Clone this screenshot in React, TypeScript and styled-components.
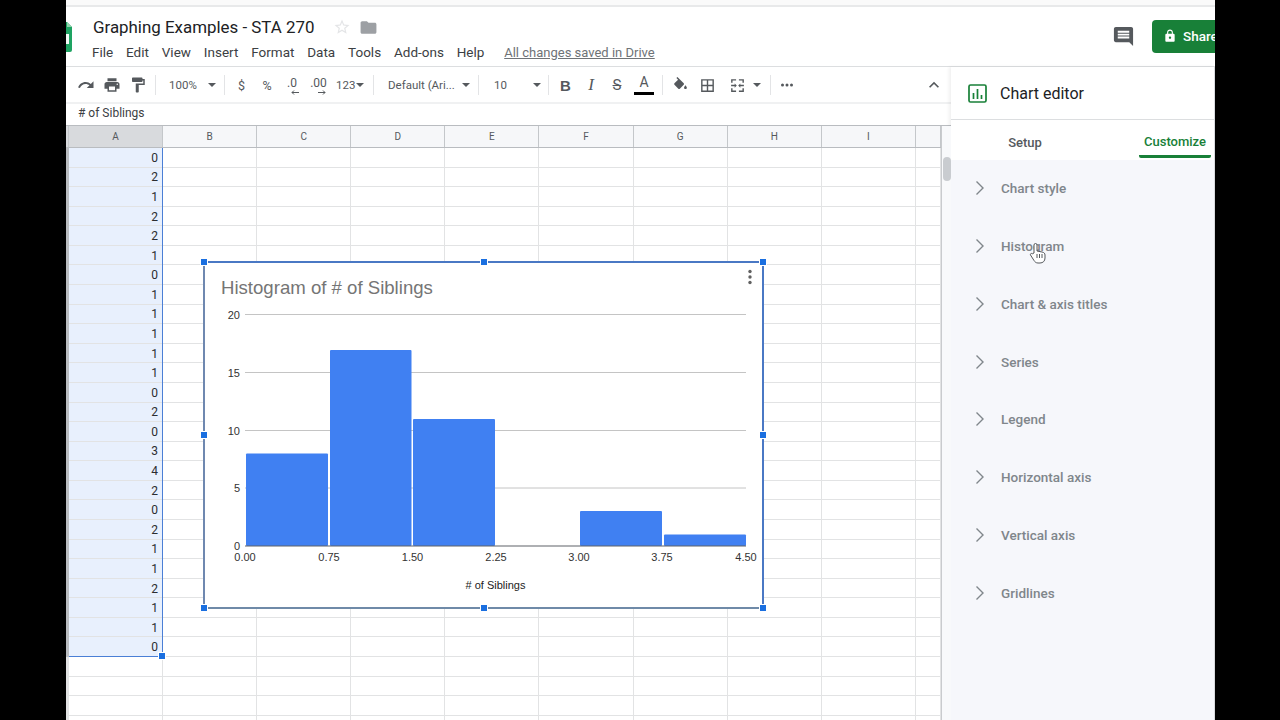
import styled, { createGlobalStyle } from "styled-components";

const GlobalStyle = createGlobalStyle`
    html, body {
        margin: 0;
        padding: 0;
        background: #000000;
    }
    * {
        box-sizing: border-box;
    }
`;

const Page = styled.div`
    width: 1280px;
    height: 720px;
    padding: 0 65px 0 66px;
    overflow: hidden;
    background: #000000;
    font-family: Roboto, "Liberation Sans", sans-serif;
`;

const Screen = styled.div`
    display: flex;
    flex-direction: column;
    width: 1149px;
    height: 720px;
    overflow: hidden;
    background: #ffffff;
`;

const TopStrip = styled.div`
    flex: 0 0 7px;
    border-bottom: 2px solid #e8e9ea;
    background: #fafafa;
`;

const TitleBar = styled.header`
    display: flex;
    flex: 0 0 60px;
    align-items: flex-start;
    border-bottom: 1px solid #dcdee0;
`;

const LogoClip = styled.svg`
    flex: 0 0 auto;
    width: 6px;
    height: 30px;
    margin-top: 15px;
    margin-right: 20px;
`;

const TitleColumn = styled.div`
    display: flex;
    flex-direction: column;
    padding-top: 9px;
`;

const DocRow = styled.div`
    display: flex;
    align-items: center;
    height: 22px;
    padding-left: 1px;
`;

const DocTitle = styled.span`
    width: 240px;
    color: #202124;
    font-size: 16.9px;
    white-space: nowrap;
`;

const FolderGap = styled.span`
    width: 8px;
`;

const MenuRow = styled.nav`
    display: flex;
    align-items: center;
    gap: 12.85px;
    height: 20px;
    margin-top: 4px;
    color: #3c4043;
    font-size: 13.5px;
`;

const SavedLink = styled.span`
    margin-left: 7px;
    color: #6f7377;
    font-size: 13px;
    text-decoration: underline;
`;

const TitleActions = styled.div`
    display: flex;
    align-items: center;
    margin-left: auto;
    padding-top: 13px;
`;

const ShareButton = styled.div`
    display: flex;
    flex: 0 0 auto;
    align-items: center;
    gap: 6px;
    width: 63px;
    height: 33px;
    margin-left: 17px;
    padding: 0 0 2px 11px;
    border-radius: 4px 0 0 4px;
    overflow: hidden;
    background: #188038;
    color: #ffffff;
    font-size: 13.5px;
    font-weight: 500;
    > svg {
        flex: 0 0 auto;
    }
`;

const Workspace = styled.div`
    display: flex;
    flex: 1 1 auto;
    min-height: 0;
`;

const SheetColumn = styled.div`
    display: flex;
    flex: 0 0 885px;
    flex-direction: column;
    min-width: 0;
`;

const Toolbar = styled.div`
    display: flex;
    flex: 0 0 37px;
    align-items: center;
    padding: 1px 7px 0 6px;
    border-bottom: 2px solid #f0f1f2;
    color: #55595d;
`;

const ToolSpacer = styled.span`
    flex: 1;
`;

const ToolButton = styled.div<{ $w: number }>`
    display: flex;
    flex: 0 0 ${(props) => props.$w}px;
    align-items: center;
    justify-content: center;
    height: 24px;
    position: relative;
    font-size: 12.5px;
`;

const ToolDrop = styled.div<{ $w: number; $left: number; $right: number }>`
    display: flex;
    flex: 0 0 ${(props) => props.$w}px;
    align-items: center;
    justify-content: space-between;
    height: 24px;
    padding: 0 ${(props) => props.$right}px 0 ${(props) => props.$left}px;
    font-size: 11.5px;
    white-space: nowrap;
`;

const Divider = styled.div`
    flex: 0 0 1px;
    height: 20px;
    margin: 0 4px;
    background: #e3e4e6;
`;

const Caret = styled.span`
    flex: 0 0 auto;
    width: 0;
    height: 0;
    border-top: 4px solid #55595d;
    border-right: 4px solid transparent;
    border-left: 4px solid transparent;
`;

const CaretSlot = styled.div`
    display: flex;
    flex: 0 0 10px;
    justify-content: center;
    margin-right: 4px;
`;

const DecimalLabel = styled.span`
    margin-top: -5px;
    font-size: 12px;
`;

const DecimalArrow = styled.svg`
    position: absolute;
    top: 17px;
    left: 50%;
    margin-left: -1px;
`;

const BoldLetter = styled.span`
    font-family: "Liberation Sans", sans-serif;
    font-size: 15px;
    font-weight: 700;
`;

const ItalicLetter = styled.span`
    font-family: "Liberation Serif", serif;
    font-size: 17px;
    font-style: italic;
`;

const StrikeLetter = styled.span`
    font-size: 15px;
    text-decoration: line-through;
`;

const ColorLetter = styled.span`
    display: flex;
    flex-direction: column;
    align-items: center;
    font-size: 14px;
    line-height: 15px;
    &::after {
        content: "";
        width: 20px;
        height: 3px;
        margin-top: 2px;
        background: #000000;
    }
`;

const FormulaBar = styled.div`
    display: flex;
    flex: 0 0 22px;
    align-items: center;
    padding: 0 0 3px 12px;
    border-bottom: 1px solid #b9bcc0;
    color: #3c4043;
    font-size: 12px;
`;

const GridArea = styled.div`
    display: flex;
    flex: 1 1 auto;
    min-height: 0;
`;

const GridWrap = styled.div`
    position: relative;
    flex: 0 0 875px;
    overflow: hidden;
`;

const HeaderRow = styled.div`
    display: grid;
    grid-template-columns: 3px repeat(9, 94.1px) 25px;
    height: 22px;
    border-bottom: 1px solid #b9bcc0;
    background: #f6f7f9;
`;

const HeaderCell = styled.div<{ $selected?: boolean }>`
    display: flex;
    align-items: center;
    justify-content: center;
    border-right: 1px solid #c4c7ca;
    background: ${(props) => (props.$selected ? "#d8dadd" : "transparent")};
    color: #55595d;
    font-size: 10px;
`;

const DataRow = styled.div`
    display: grid;
    grid-template-columns: 3px repeat(9, 94.1px) 25px;
    height: 19.58px;
`;

const DataCell = styled.div<{ $selected?: boolean }>`
    display: flex;
    align-items: center;
    justify-content: flex-end;
    padding: 1px 4px 0 0;
    border-right: 1px solid #e2e3e4;
    border-bottom: 1px solid #e2e3e4;
    background: ${(props) => (props.$selected ? "#e8f0fd" : "#ffffff")};
    color: #2b2d30;
    font-size: 12px;
`;

const GutterCell = styled.div<{ $selected?: boolean }>`
    background: ${(props) => (props.$selected ? "#b9bcc0" : "#e2e3e4")};
`;

const Selection = styled.div`
    position: absolute;
    top: 22px;
    left: 3px;
    width: 94.1px;
    height: 509px;
    border-right: 1px solid #4a7fd6;
    border-bottom: 1px solid #4a7fd6;
    pointer-events: none;
    &::after {
        content: "";
        position: absolute;
        right: -4px;
        bottom: -4px;
        width: 6px;
        height: 6px;
        border: 1px solid #ffffff;
        background: #1a6fe0;
    }
`;

const ChartFrame = styled.div`
    position: absolute;
    top: 135px;
    left: 137px;
    width: 561px;
    height: 348px;
    border: 2px solid #4a78c4;
    border-bottom-color: #6f8aa8;
    border-left-color: #6f88b0;
    background: #ffffff;
`;

const ChartCanvas = styled.svg`
    display: block;
    position: absolute;
    top: -1px;
    left: -1px;
`;

const Handle = styled.span<{ $x: number; $y: number }>`
    position: absolute;
    top: calc(${(props) => props.$y * 50}% + ${(props) => props.$y - 1}px);
    left: calc(${(props) => props.$x * 50}% + ${(props) => props.$x - 1}px);
    width: 8px;
    height: 8px;
    margin: -4px 0 0 -4px;
    border: 1px solid #ffffff;
    background: #1a6fe0;
`;

const ScrollTrack = styled.div`
    position: relative;
    flex: 0 0 10px;
    border-left: 1px solid #c9cbce;
    background: #f8f9fb;
`;

const ScrollThumb = styled.div`
    position: absolute;
    top: 31px;
    left: 1px;
    width: 8px;
    height: 24px;
    border-radius: 4px;
    background: #c9ccd0;
`;

const Panel = styled.aside`
    display: flex;
    flex: 0 0 264px;
    flex-direction: column;
    border-right: 1px solid #d9dbde;
    box-shadow: -2px 0 3px rgba(60, 64, 67, 0.08);
`;

const PanelHeader = styled.div`
    display: flex;
    flex: 0 0 53px;
    align-items: center;
    gap: 13px;
    padding-left: 17px;
    border-bottom: 1px solid #dcdee0;
    color: #202124;
    font-size: 16px;
`;

const TabRow = styled.div`
    display: flex;
    flex: 0 0 40px;
    padding-left: 37px;
`;

const Tab = styled.div<{ $active?: boolean; $w: number }>`
    display: flex;
    flex: 0 0 ${(props) => props.$w}px;
    align-items: center;
    justify-content: center;
    height: 38px;
    padding-top: ${(props) => (props.$active ? 8 : 6)}px;
    color: ${(props) => (props.$active ? "#188038" : "#55595d")};
    font-size: 13px;
    font-weight: 500;
    ${(props) => (props.$active ? "border-bottom: 3px solid #188038; border-radius: 0 0 2px 2px;" : "")}
`;

const TabSpacer = styled.div`
    flex: 0 0 77px;
`;

const SectionList = styled.div`
    flex: 1 1 auto;
    position: relative;
    background: #f6f7fb;
`;

const SectionRow = styled.div`
    display: flex;
    align-items: center;
    gap: 16px;
    height: 57.87px;
    padding-left: 24px;
    color: #80868b;
    font-size: 13.5px;
    font-weight: 500;
    &:first-child {
        margin-top: -1px;
    }
`;

const HandCursor = styled.svg`
    position: absolute;
    top: 82px;
    left: 78px;
`;

const Icon = ({ d, size = 18, fill = "#55595d" }: { d: string; size?: number; fill?: string }) => (
    <svg width={size} height={size} viewBox="0 0 24 24">
        <path d={d} fill={fill} />
    </svg>
);

const ICONS = {
    redo: "M18.4 10.6C16.55 8.99 14.15 8 11.5 8c-4.65 0-8.58 3.03-9.96 7.22L3.9 16c1.05-3.19 4.05-5.5 7.6-5.5 1.95 0 3.73.72 5.12 1.88L13 16h9V7l-3.6 3.6z",
    print: "M19 8H5c-1.66 0-3 1.34-3 3v6h4v4h12v-4h4v-6c0-1.66-1.34-3-3-3zm-3 11H8v-5h8v5zm3-7c-.55 0-1-.45-1-1s.45-1 1-1 1 .45 1 1-.45 1-1 1zm-1-9H6v4h12V3z",
    paint: "M18 4V3c0-.55-.45-1-1-1H5c-.55 0-1 .45-1 1v4c0 .55.45 1 1 1h12c.55 0 1-.45 1-1V6h1v4H9v11c0 .55.45 1 1 1h2c.55 0 1-.45 1-1v-9h8V4h-3z",
    fill: "M16.56 8.94L7.62 0 6.21 1.41l2.38 2.38-5.15 5.15c-.59.59-.59 1.54 0 2.12l5.5 5.5c.29.29.68.44 1.06.44s.77-.15 1.06-.44l5.5-5.5c.59-.58.59-1.53 0-2.12zM19 11.5s-2 2.17-2 3.5c0 1.1.9 2 2 2s2-.9 2-2c0-1.33-2-3.5-2-3.5z",
    borders: "M3 3v18h18V3H3zm8 16H5v-6h6v6zm0-8H5V5h6v6zm8 8h-6v-6h6v6zm0-8h-6V5h6v6z",
    merge: "M3 3h7v2H5v3H3V3zm11 0h7v5h-2V5h-5V3zM3 16h2v3h5v2H3v-5zm16 0h2v5h-7v-2h5v-3zM3 11h5V9l3 3-3 3v-2H3v-2zm18 0v2h-5v2l-3-3 3-3v2h5z",
    more: "M6 10a2 2 0 1 0 0 4 2 2 0 0 0 0-4zm6 0a2 2 0 1 0 0 4 2 2 0 0 0 0-4zm6 0a2 2 0 1 0 0 4 2 2 0 0 0 0-4z",
    up: "M7.41 15.41L12 10.83l4.59 4.58L18 14l-6-6-6 6z",
    comment: "M21.99 4c0-1.1-.89-2-1.99-2H4c-1.1 0-2 .9-2 2v12c0 1.1.9 2 2 2h14l4 4-.01-18zM18 14H6v-2h12v2zm0-3H6V9h12v2zm0-3H6V6h12v2z",
    lock: "M18 8h-1V6c0-2.76-2.24-5-5-5S7 3.24 7 6v2H6c-1.1 0-2 .9-2 2v10c0 1.1.9 2 2 2h12c1.1 0 2-.9 2-2V10c0-1.1-.9-2-2-2zm-6 9c-1.1 0-2-.9-2-2s.9-2 2-2 2 .9 2 2-.9 2-2 2zm3.1-9H8.9V6c0-1.71 1.39-3.1 3.1-3.1 1.71 0 3.1 1.39 3.1 3.1v2z",
    star: "M22 9.24l-7.19-.62L12 2 9.19 8.63 2 9.24l5.46 4.73L5.82 21 12 17.27 18.18 21l-1.63-7.03L22 9.24zM12 15.4l-3.76 2.27 1-4.28-3.32-2.88 4.38-.38L12 6.1l1.71 4.04 4.38.38-3.32 2.88 1 4.28L12 15.4z",
    folder: "M10 4H4c-1.1 0-1.99.9-1.99 2L2 18c0 1.1.9 2 2 2h16c1.1 0 2-.9 2-2V8c0-1.1-.9-2-2-2h-8l-2-2z",
};

const MENU = ["File", "Edit", "View", "Insert", "Format", "Data", "Tools", "Add-ons", "Help"];
const COLUMNS = ["A", "B", "C", "D", "E", "F", "G", "H", "I", ""];
const VALUES = [0, 2, 1, 2, 2, 1, 0, 1, 1, 1, 1, 1, 0, 2, 0, 3, 4, 2, 0, 2, 1, 1, 2, 1, 1, 0];
const ROW_COUNT = 30;
const SECTIONS = ["Chart style", "Histogram", "Chart & axis titles", "Series", "Legend", "Horizontal axis", "Vertical axis", "Gridlines"];

// chart coords are frame relative (frame sits at 204,262 in the picture)
const PLOT_LEFT = 41;
const PLOT_RIGHT = 542;
const BASELINE = 284;
const Y_TICKS = [
    { label: "20", y: 52.5 },
    { label: "15", y: 110.5 },
    { label: "10", y: 168.5 },
    { label: "5", y: 226 },
    { label: "0", y: 284 },
];
const X_TICKS = [
    { label: "0.00", x: 41 },
    { label: "0.75", x: 125 },
    { label: "1.50", x: 208.5 },
    { label: "2.25", x: 292 },
    { label: "3.00", x: 375 },
    { label: "3.75", x: 458 },
    { label: "4.50", x: 542 },
];
const BARS = [
    { x: 42, w: 82, top: 191.5 },
    { x: 126, w: 81.5, top: 88 },
    { x: 209, w: 82, top: 157 },
    { x: 376, w: 82, top: 249 },
    { x: 460, w: 82, top: 272.5 },
];
const HANDLES = [
    [0, 0],
    [1, 0],
    [2, 0],
    [0, 1],
    [2, 1],
    [0, 2],
    [1, 2],
    [2, 2],
];

function HistogramChart() {
    return (
        <ChartFrame>
            <ChartCanvas width="560" height="346" viewBox="0 0 560 346" fontFamily="'Liberation Sans', sans-serif">
                <text x="17" y="32" fontSize="18.6" fill="#757575">
                    Histogram of # of Siblings
                </text>
                <circle cx="546" cy="9.5" r="1.7" fill="#616161" />
                <circle cx="546" cy="15" r="1.7" fill="#616161" />
                <circle cx="546" cy="20.5" r="1.7" fill="#616161" />
                {Y_TICKS.slice(0, 4).map((t) => (
                    <line key={t.label} x1={PLOT_LEFT} x2={PLOT_RIGHT} y1={t.y} y2={t.y} stroke="#c4c4c4" />
                ))}
                {Y_TICKS.map((t) => (
                    <text key={t.label} x="36" y={t.y + 4} fontSize="11" fill="#333333" textAnchor="end">
                        {t.label}
                    </text>
                ))}
                {BARS.map((b) => (
                    <rect key={b.x} x={b.x} y={b.top} width={b.w} height={BASELINE - b.top} rx="1" fill="#4080f2" />
                ))}
                <line x1={PLOT_LEFT} x2={PLOT_RIGHT} y1={BASELINE} y2={BASELINE} stroke="#5f6368" strokeWidth="1.2" />
                {X_TICKS.map((t) => (
                    <text key={t.label} x={t.x} y="299" fontSize="11" fill="#333333" textAnchor="middle">
                        {t.label}
                    </text>
                ))}
                <text x="291.5" y="327" fontSize="11" fill="#222222" textAnchor="middle">
                    # of Siblings
                </text>
            </ChartCanvas>
            {HANDLES.map(([x, y]) => (
                <Handle key={`${x}-${y}`} $x={x} $y={y} />
            ))}
        </ChartFrame>
    );
}

function App() {
    return (
        <Page>
            <GlobalStyle />
            <Screen>
                <TopStrip />
                <TitleBar>
                    <LogoClip viewBox="0 0 6 30">
                        <path d="M0 0h1l5 5v23a2 2 0 0 1-2 2H0z" fill="#1ea362" />
                        <path d="M1 0l5 5H1z" fill="#8ed1ab" />
                        <rect x="0" y="12" width="3" height="10" fill="#f4fbf7" />
                    </LogoClip>
                    <TitleColumn>
                        <DocRow>
                            <DocTitle>Graphing Examples - STA 270</DocTitle>
                            <Icon d={ICONS.star} size={18} fill="#e4e5e7" />
                            <FolderGap />
                            <Icon d={ICONS.folder} size={19} fill="#9da0a4" />
                        </DocRow>
                        <MenuRow>
                            {MENU.map((item) => (
                                <span key={item}>{item}</span>
                            ))}
                            <SavedLink>All changes saved in Drive</SavedLink>
                        </MenuRow>
                    </TitleColumn>
                    <TitleActions>
                        <Icon d={ICONS.comment} size={23} />
                        <ShareButton>
                            <Icon d={ICONS.lock} size={14} fill="#ffffff" />
                            Share
                        </ShareButton>
                    </TitleActions>
                </TitleBar>
                <Workspace>
                    <SheetColumn>
                        <Toolbar>
                            <ToolButton $w={27}>
                                <Icon d={ICONS.redo} />
                            </ToolButton>
                            <ToolButton $w={26}>
                                <Icon d={ICONS.print} />
                            </ToolButton>
                            <ToolButton $w={26}>
                                <Icon d={ICONS.paint} />
                            </ToolButton>
                            <Divider />
                            <ToolDrop $w={60} $left={9} $right={4}>
                                100%
                                <Caret />
                            </ToolDrop>
                            <Divider />
                            <ToolButton $w={25}>$</ToolButton>
                            <ToolButton $w={26}>%</ToolButton>
                            <ToolButton $w={24}>
                                <DecimalLabel>.0</DecimalLabel>
                                <DecimalArrow width="8" height="5" viewBox="0 0 8 5">
                                    <path d="M8 2.5H1M3 .5L1 2.5l2 2" fill="none" stroke="#55595d" />
                                </DecimalArrow>
                            </ToolButton>
                            <ToolButton $w={29}>
                                <DecimalLabel>.00</DecimalLabel>
                                <DecimalArrow width="8" height="5" viewBox="0 0 8 5">
                                    <path d="M0 2.5h7M5 .5l2 2-2 2" fill="none" stroke="#55595d" />
                                </DecimalArrow>
                            </ToolButton>
                            <ToolDrop $w={36} $left={3} $right={5}>
                                123
                                <Caret />
                            </ToolDrop>
                            <Divider />
                            <ToolDrop $w={96} $left={10} $right={4}>
                                Default (Ari...
                                <Caret />
                            </ToolDrop>
                            <Divider />
                            <ToolDrop $w={61} $left={11} $right={3}>
                                10
                                <Caret />
                            </ToolDrop>
                            <Divider />
                            <ToolButton $w={25}>
                                <BoldLetter>B</BoldLetter>
                            </ToolButton>
                            <ToolButton $w={26}>
                                <ItalicLetter>I</ItalicLetter>
                            </ToolButton>
                            <ToolButton $w={26}>
                                <StrikeLetter>S</StrikeLetter>
                            </ToolButton>
                            <ToolButton $w={28}>
                                <ColorLetter>A</ColorLetter>
                            </ToolButton>
                            <Divider />
                            <ToolButton $w={26}>
                                <Icon d={ICONS.fill} size={17} />
                            </ToolButton>
                            <ToolButton $w={29}>
                                <Icon d={ICONS.borders} size={17} />
                            </ToolButton>
                            <ToolButton $w={30}>
                                <Icon d={ICONS.merge} size={17} />
                            </ToolButton>
                            <CaretSlot>
                                <Caret />
                            </CaretSlot>
                            <Divider />
                            <ToolButton $w={24}>
                                <Icon d={ICONS.more} size={18} />
                            </ToolButton>
                            <ToolSpacer />
                            <Icon d={ICONS.up} size={20} />
                        </Toolbar>
                        <FormulaBar># of Siblings</FormulaBar>
                        <GridArea>
                            <GridWrap>
                                <HeaderRow>
                                    <HeaderCell $selected />
                                    {COLUMNS.map((c, i) => (
                                        <HeaderCell key={i} $selected={c === "A"}>
                                            {c}
                                        </HeaderCell>
                                    ))}
                                </HeaderRow>
                                {Array.from({ length: ROW_COUNT }, (_, row) => (
                                    <DataRow key={row}>
                                        <GutterCell $selected={row < VALUES.length} />
                                        {COLUMNS.map((c, col) => (
                                            <DataCell key={col} $selected={col === 0 && row < VALUES.length}>
                                                {col === 0 ? VALUES[row] : ""}
                                            </DataCell>
                                        ))}
                                    </DataRow>
                                ))}
                                <Selection />
                                <HistogramChart />
                            </GridWrap>
                            <ScrollTrack>
                                <ScrollThumb />
                            </ScrollTrack>
                        </GridArea>
                    </SheetColumn>
                    <Panel>
                        <PanelHeader>
                            <svg width="19" height="19" viewBox="0 0 19 19">
                                <rect x="1" y="1" width="17" height="17" rx="1.5" fill="none" stroke="#188038" strokeWidth="1.7" />
                                <path d="M5.5 9v6M9.5 5v10M13.5 11v4" stroke="#188038" strokeWidth="1.7" />
                            </svg>
                            Chart editor
                        </PanelHeader>
                        <TabRow>
                            <Tab $w={74}>Setup</Tab>
                            <TabSpacer />
                            <Tab $w={72} $active>
                                Customize
                            </Tab>
                        </TabRow>
                        <SectionList>
                            {SECTIONS.map((s) => (
                                <SectionRow key={s}>
                                    <svg width="10" height="16" viewBox="0 0 10 16">
                                        <path d="M1.5 1.5L8 8l-6.5 6.5" fill="none" stroke="#80868b" strokeWidth="1.4" />
                                    </svg>
                                    {s}
                                </SectionRow>
                            ))}
                            <HandCursor width="18" height="22" viewBox="0 0 18 22">
                                <path
                                    d="M5 11V3a1.5 1.5 0 0 1 3 0v6l5 1c2 .4 3 1.4 3 3v3c0 3-2 5-5 5H9c-2 0-3-1-4-2.5L1.5 13c-.6-1 .8-2.2 1.8-1.2z"
                                    fill="#ffffff"
                                    stroke="#55595d"
                                />
                                <path d="M8 12v4M10.5 12v4M13 12v4" stroke="#55595d" />
                            </HandCursor>
                        </SectionList>
                    </Panel>
                </Workspace>
            </Screen>
        </Page>
    );
}

export default App;
